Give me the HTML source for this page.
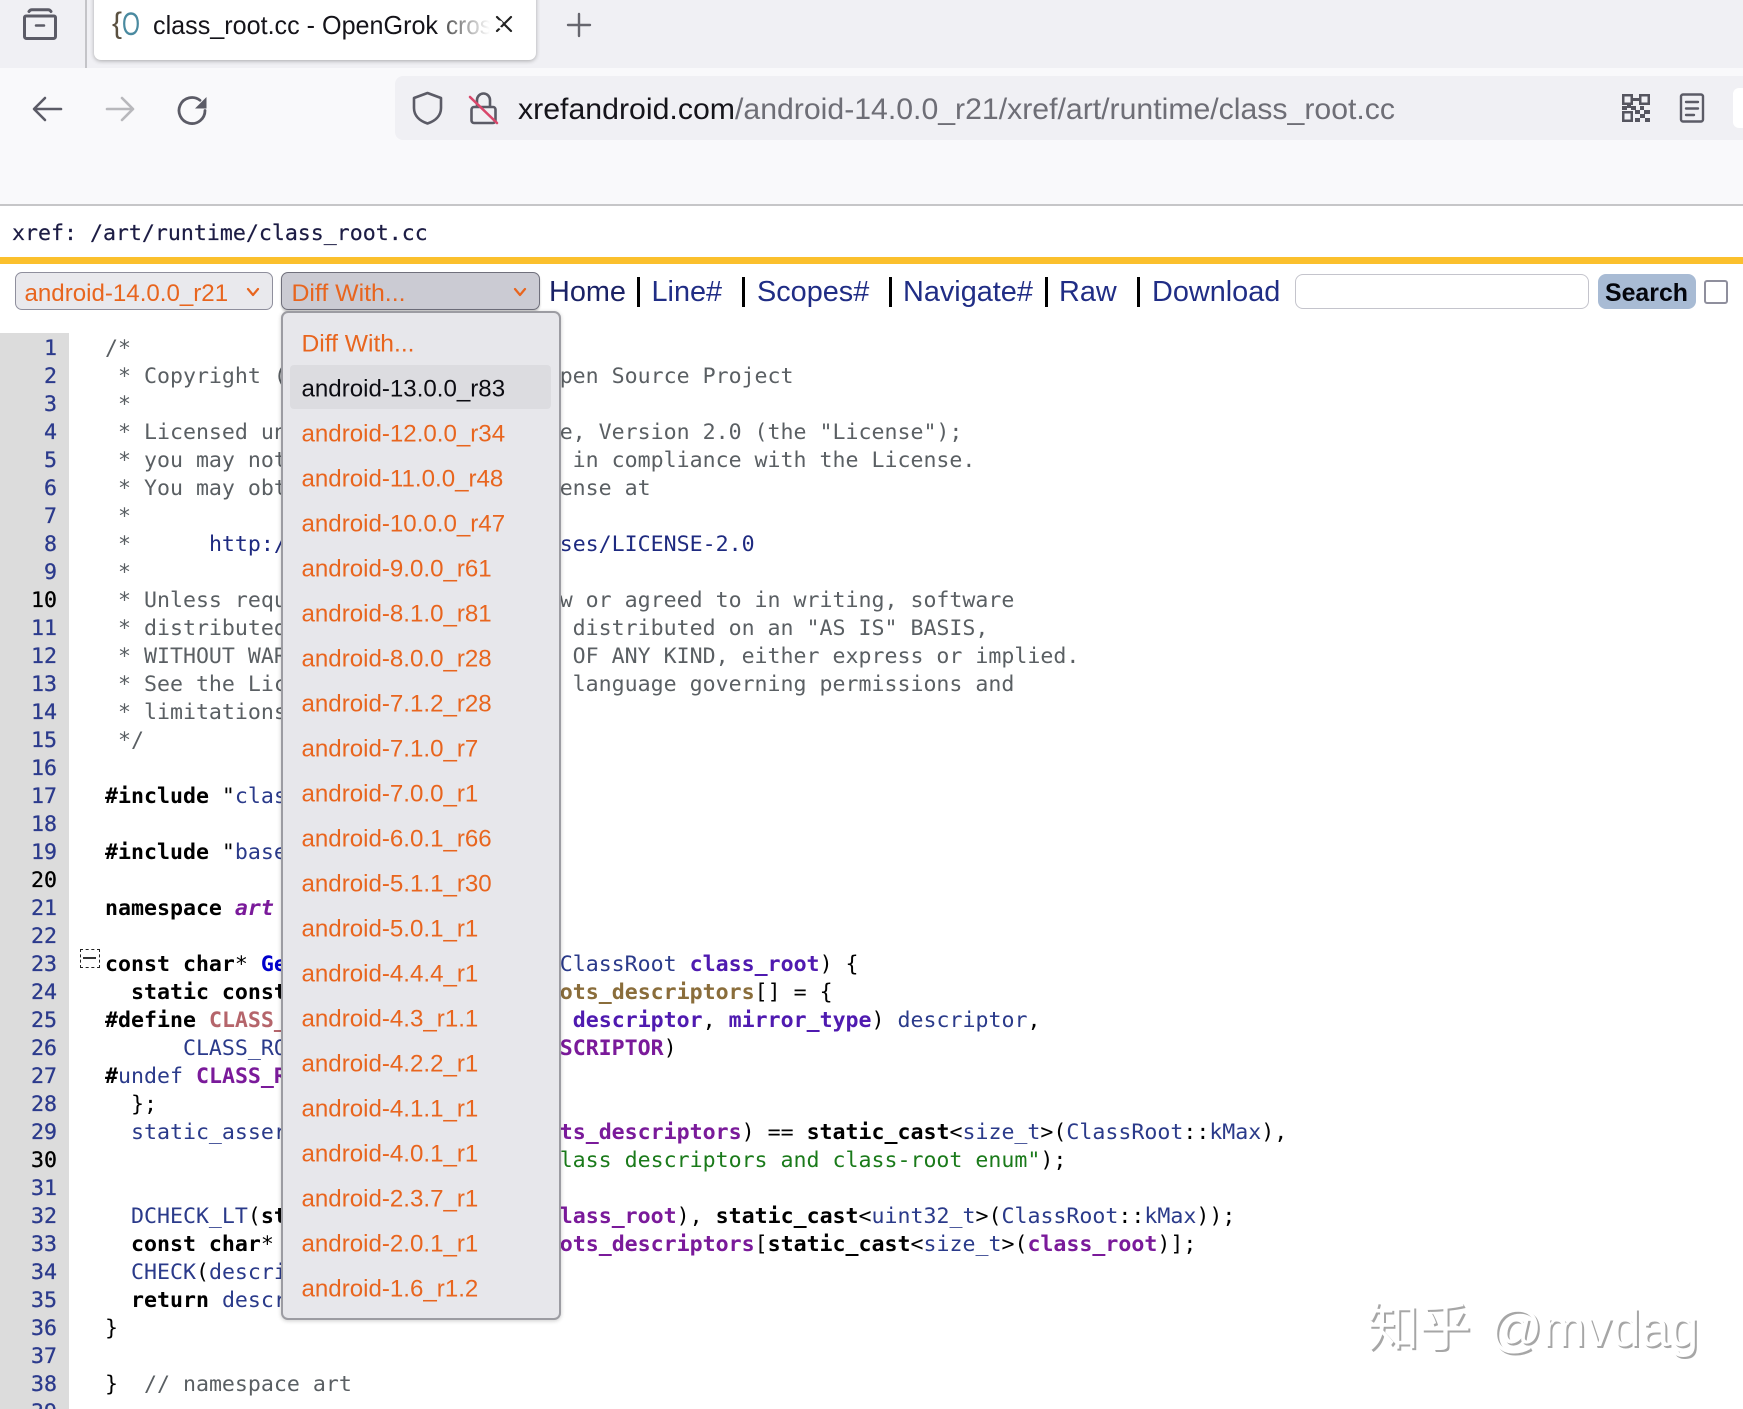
<!DOCTYPE html>
<html lang="en"><head><meta charset="utf-8"><title>class_root.cc - OpenGrok</title>
<style>
html,body{margin:0;padding:0;background:#fff;width:1743px;height:1409px;overflow:hidden}
#wrap{position:relative;width:1743px;height:1409px;overflow:hidden}
.abs{position:absolute}
#tabs{left:0;top:0;width:1743px;height:68px;background:#f0f0f4}
#tool{left:0;top:68px;width:1743px;height:136px;background:#f9f9fb}
#line{left:0;top:204px;width:1743px;height:2px;background:#c6c6c8}
#tab{left:94px;top:-10px;width:442px;height:70px;background:#fff;border-radius:7px;box-shadow:0 1px 4px rgba(0,0,0,.3)}
#url{left:395px;top:76px;width:1348px;height:64px;background:#f0f0f4;border-radius:8px 0 0 8px}
#side{left:1733px;top:88px;width:10px;height:40px;background:#fff;border-radius:6px 0 0 6px}
#yellow{left:0;top:257px;width:1743px;height:7px;background:#fbc02d}
#gutter{left:0;top:333px;width:69px;height:1076px;background:#dcdcdc}
.mono{font-family:"DejaVu Sans Mono","Liberation Mono",monospace;font-size:21.58px;line-height:28px;white-space:pre}
#xref{left:12px;top:220px;color:#1c1c44;-webkit-text-stroke:.2px #1c1c44}
#nums{left:0;top:334.500px;width:57px;text-align:right;color:#2b3a8c;-webkit-text-stroke:.3px #2b3a8c}
#nums b{font-weight:400;color:#000;-webkit-text-stroke:.3px #000}
#code{left:105px;top:334.500px;color:#000}
.c{color:#5a5f63}.n{color:#2a3a8a}.u{color:#1e2a80}
.k{font-weight:700;color:#000}
.p{font-weight:700;color:#7a1a9a}.v{font-weight:700;color:#4f1ab0}
.r{font-weight:700;color:#b5656b}.o{font-weight:700;color:#8a6d3b}
.g{color:#1a7a1a}.f{font-weight:700;color:#0000cc}
.i{font-weight:700;font-style:italic;color:#7a1a9a}
#sel1,#sel2{top:272px;height:36px;border-radius:7px;box-sizing:content-box}
#sel1{left:15px;width:256px;background:#e9e9ed;border:1.5px solid #8f8f9d}
#sel2{left:281px;width:257px;background:#cbcbd3;border:1.5px solid #70707c;box-shadow:0 2px 2px rgba(0,0,0,.2)}
#drop{left:281px;top:311px;width:276px;height:1005px;background:#e7e7eb;border:2px solid #9c9ca2;border-radius:7px;box-shadow:0 1px 4px rgba(0,0,0,.2)}
#hi{left:290px;top:365px;width:261px;height:44px;background:#dcdce0;border-radius:4px}
#q{left:1295px;top:274px;width:292px;height:33px;background:#fff;border:1.5px solid #c4c4cc;border-radius:8px}
#sb{left:1598px;top:274px;width:98px;height:35px;background:#a8bbd4;border-radius:8px}
#cb{left:1704px;top:280px;width:20px;height:20px;background:#fff;border:2px solid #8f8f9d;border-radius:3px}
.sep{top:277px;width:3px;height:30px;background:#000}
#fold{left:80px;top:949px;width:18px;height:17px;border:1.5px dashed #222}
#fold i{position:absolute;left:2px;top:7px;width:13px;height:2px;background:#333}
#ui{left:0;top:0}
text{font-family:"Liberation Sans",sans-serif}
.it{font-size:24.1px;fill:#e8651e}
.nav{font-size:28.85px;fill:#202d85}
#wm{left:1367px;top:1297px;font:52px/64px "Liberation Sans","Noto Sans CJK SC",sans-serif;word-spacing:4px;color:#fff;text-shadow:2px 2px 0 #a6a6a6;white-space:pre}
</style></head><body><div id="wrap">
<div class="abs" id="tabs"></div>
<div class="abs" id="tool"></div>
<div class="abs" style="left:85px;top:0;width:2px;height:68px;background:#c4c4c8"></div>
<div class="abs" id="tab"></div>
<div class="abs" id="url"></div>
<div class="abs" id="side"></div>
<div class="abs" id="line"></div>
<div class="abs mono" id="xref">xref: /art/runtime/class_root.cc</div>
<div class="abs" id="yellow"></div>
<div class="abs" id="gutter"></div>
<div class="abs mono" id="nums">1
2
3
4
5
6
7
8
9
<b>10</b>
11
12
13
14
15
16
17
18
19
<b>20</b>
21
22
23
24
25
26
27
28
29
<b>30</b>
31
32
33
34
35
36
37
38
39</div>
<div class="abs mono" id="code"><span class="c">/*
 * Copyright (C) 2018 The Android Open Source Project
 *
 * Licensed under the Apache License, Version 2.0 (the "License");
 * you may not use this file except in compliance with the License.
 * You may obtain a copy of the License at
 *
 *      </span><span class="u">http://www.apache.org/licenses/LICENSE-2.0</span><span class="c">
 *
 * Unless required by applicable law or agreed to in writing, software
 * distributed under the License is distributed on an "AS IS" BASIS,
 * WITHOUT WARRANTIES OR CONDITIONS OF ANY KIND, either express or implied.
 * See the License for the specific language governing permissions and
 * limitations under the License.
 */</span>

<span class="k">#include</span> "<span class="n">class_root.h</span>"

<span class="k">#include</span> "<span class="n">base/logging.h</span>"

<span class="k">namespace</span> <span class="i">art</span> {

<span class="k">const char</span>* <span class="f">GetClassRootDescriptor</span>(<span class="n">ClassRoot</span> <span class="v">class_root</span>) {
  <span class="k">static const</span> <span class="k">char</span>* <span class="k">const</span> <span class="o">class_roots_descriptors</span>[] = {
<span class="k">#define</span> <span class="r">CLASS_ROOT_DESCRIPTOR</span>(<span class="n">name</span>, <span class="v">descriptor</span>, <span class="v">mirror_type</span>) <span class="n">descriptor</span>,
      <span class="n">CLASS_ROOT_LIST</span>(<span class="p">CLASS_ROOT_DESCRIPTOR</span>)
<span class="k">#</span><span class="n">undef</span> <span class="p">CLASS_ROOT_DESCRIPTOR</span>
  };
  <span class="n">static_assert</span>(<span class="n">arraysize</span>(<span class="p">class_roots_descriptors</span>) == <span class="k">static_cast</span>&lt;<span class="n">size_t</span>&gt;(<span class="n">ClassRoot</span>::<span class="n">kMax</span>),
                <span class="g">"Mismatch between class descriptors and class-root enum"</span>);

  <span class="n">DCHECK_LT</span>(<span class="k">static_cast</span>&lt;<span class="n">uint32_t</span>&gt;(<span class="p">class_root</span>), <span class="k">static_cast</span>&lt;<span class="n">uint32_t</span>&gt;(<span class="n">ClassRoot</span>::<span class="n">kMax</span>));
  <span class="k">const char</span>* <span class="n">descriptor</span> = <span class="p">class_roots_descriptors</span>[<span class="k">static_cast</span>&lt;<span class="n">size_t</span>&gt;(<span class="p">class_root</span>)];
  <span class="n">CHECK</span>(<span class="n">descriptor</span> != <span class="n">nullptr</span>);
  <span class="k">return</span> <span class="n">descriptor</span>;
}

}  <span class="c">// namespace art</span></div>
<div class="abs" id="fold"><i></i></div>
<div class="abs" id="sel1"></div>
<div class="abs" id="sel2"></div>
<div class="abs sep" style="left:637px"></div>
<div class="abs sep" style="left:742px"></div>
<div class="abs sep" style="left:889px"></div>
<div class="abs sep" style="left:1045px"></div>
<div class="abs sep" style="left:1137px"></div>
<div class="abs" id="q"></div>
<div class="abs" id="sb"></div>
<div class="abs" id="cb"></div>
<div class="abs" id="drop"></div>
<div class="abs" id="hi"></div>
<div class="abs" id="wm">知乎 @mvdag</div>
<svg class="abs" id="ui" width="1743" height="1409" viewBox="0 0 1743 1409">
<defs><linearGradient id="fade" gradientUnits="userSpaceOnUse" x1="446" x2="490" y1="0" y2="0"><stop offset="0" stop-color="#555"/><stop offset="1" stop-color="#fff"/></linearGradient></defs>
<!-- archive icon -->
<g fill="none" stroke="#5b5b66" stroke-width="3" stroke-linecap="round" stroke-linejoin="round">
<path d="M26 16h28a1.500 1.500 0 0 1 1.500 1.500v19a2 2 0 0 1-2 2h-27a2 2 0 0 1-2-2v-19a1.500 1.500 0 0 1 1.500-1.500z"/>
<path d="M29 11.500q1-1.800 3-1.800h16q2 0 3 1.800"/>
<path d="M36 25.500h8" stroke-width="2.500"/>
<!-- back / forward / reload -->
<path d="M35 109h26M45 98l-11 11 11 11" stroke-width="2.600"/>
<path d="M107 109h26M122 98l11 11-11 11" stroke="#b8b8bc" stroke-width="2.600"/>
<path d="M205 110.500a13 13 0 1 1-5-10.200" stroke-width="2.800"/>
<!-- shield -->
<path d="M427.500 93l13.500 5v10c0 8-6 13-13.500 15.500c-7.500-2.500-13.500-7.500-13.500-15.500v-10z" stroke-width="2.600"/>
<!-- lock -->
<path d="M474 107h19a2.500 2.500 0 0 1 2.500 2.500v11a2.500 2.500 0 0 1-2.500 2.500h-19a2.500 2.500 0 0 1-2.500-2.500v-11a2.500 2.500 0 0 1 2.500-2.500zM477 107v-7a6.500 6.500 0 0 1 13 0v7" stroke-width="2.600"/>
<path d="M470 97l27 26" stroke="#d9476b" stroke-width="2.600"/>
<!-- reader -->
<path d="M1683 94.500h18a2 2 0 0 1 2 2v23a2 2 0 0 1-2 2h-18a2 2 0 0 1-2-2v-23a2 2 0 0 1 2-2zM1686 102h12M1686 108.500h12M1686 115h8" stroke-width="2.400"/>
<!-- tab close / new -->
<path d="M497 17l14 14M511 17l-14 14" stroke="#222" stroke-width="2.200"/>
<path d="M579 14v22M568 25h22" stroke="#66666e" stroke-width="2.400"/>
<!-- select chevrons -->
<path d="M248 289l5 6 5-6M515 289l5 6 5-6" stroke="#e8651e" stroke-width="2.200"/>
</g>
<path d="M206.500 97v11.500h-11.500z" fill="#5b5b66"/>
<!-- QR -->
<g fill="#55555f">
<path d="M1622 94h11v11h-11zm2.500 2.500v6h6v-6zM1639 94h11v11h-11zm2.500 2.500v6h6v-6zM1622 111h11v11h-11zm2.500 2.500v6h6v-6z" fill-rule="evenodd"/>
<path d="M1633 98h6v3h-6zM1622 106h5v4h-5zM1631 106h5v4h-5zM1640 106h4v4h-4zM1635 110h5v4h-5zM1644 110h6v4h-6zM1635 118h5v4h-5zM1640 114h5v4h-5zM1645 118h5v4h-5zM1627 105h4v3h-4z"/>
</g>
<!-- tab text -->
<text x="112" y="33" font-size="30" fill="#5a5040">{</text>
<text x="122" y="35" font-size="32" fill="#4a8aa0" textLength="18" lengthAdjust="spacingAndGlyphs">O</text>
<text x="153" y="34" font-size="26" fill="#15141a" textLength="285" lengthAdjust="spacingAndGlyphs">class_root.cc - OpenGrok</text>
<text x="446" y="34" font-size="26" fill="url(#fade)" textLength="58" lengthAdjust="spacingAndGlyphs">cross</text>
<!-- url -->
<text x="518" y="119" font-size="30" fill="#15141a" textLength="217" lengthAdjust="spacingAndGlyphs">xrefandroid.com</text>
<text x="735" y="119" font-size="30" fill="#6e6e76" textLength="660" lengthAdjust="spacingAndGlyphs">/android-14.0.0_r21/xref/art/runtime/class_root.cc</text>
<!-- selects -->
<text x="24.500" y="301" class="it">android-14.0.0_r21</text>
<text x="291.500" y="301" class="it" textLength="114" lengthAdjust="spacingAndGlyphs">Diff With...</text>
<!-- nav -->
<text x="549" y="301" class="nav" style="fill:#1a2266">Home</text>
<text x="651.500" y="301" class="nav">Line#</text>
<text x="757" y="301" class="nav">Scopes#</text>
<text x="903" y="301" class="nav">Navigate#</text>
<text x="1059" y="301" class="nav">Raw</text>
<text x="1152" y="301" class="nav">Download</text>
<text x="1605" y="301" font-size="25" font-weight="700" fill="#04060c" textLength="83" lengthAdjust="spacingAndGlyphs">Search</text>
<!-- dropdown -->
<g transform="translate(0,-0.7)">
<text x="301.500" y="352" class="it" textLength="113" lengthAdjust="spacingAndGlyphs">Diff With...</text>
<text x="301.500" y="397" class="it" style="fill:#0c0c12">android-13.0.0_r83</text>
<text x="301.500" y="442" class="it">android-12.0.0_r34</text>
<text x="301.500" y="487" class="it">android-11.0.0_r48</text>
<text x="301.500" y="532" class="it">android-10.0.0_r47</text>
<text x="301.500" y="577" class="it">android-9.0.0_r61</text>
<text x="301.500" y="622" class="it">android-8.1.0_r81</text>
<text x="301.500" y="667" class="it">android-8.0.0_r28</text>
<text x="301.500" y="712" class="it">android-7.1.2_r28</text>
<text x="301.500" y="757" class="it">android-7.1.0_r7</text>
<text x="301.500" y="802" class="it">android-7.0.0_r1</text>
<text x="301.500" y="847" class="it">android-6.0.1_r66</text>
<text x="301.500" y="892" class="it">android-5.1.1_r30</text>
<text x="301.500" y="937" class="it">android-5.0.1_r1</text>
<text x="301.500" y="982" class="it">android-4.4.4_r1</text>
<text x="301.500" y="1027" class="it">android-4.3_r1.1</text>
<text x="301.500" y="1072" class="it">android-4.2.2_r1</text>
<text x="301.500" y="1117" class="it">android-4.1.1_r1</text>
<text x="301.500" y="1162" class="it">android-4.0.1_r1</text>
<text x="301.500" y="1207" class="it">android-2.3.7_r1</text>
<text x="301.500" y="1252" class="it">android-2.0.1_r1</text>
<text x="301.500" y="1297" class="it">android-1.6_r1.2</text>
</g>
</svg>
</div></body></html>
